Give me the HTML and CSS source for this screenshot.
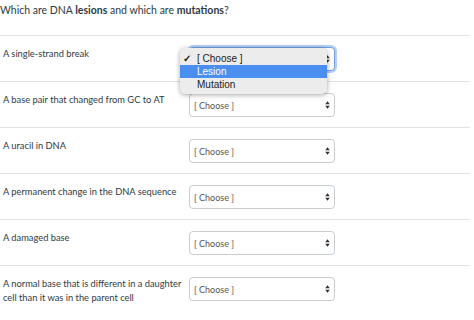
FILE: index.html
```html
<!DOCTYPE html>
<html>
	<head>
		<meta charset="utf-8">
		<title>DNA lesions and mutations</title>
		<link rel="stylesheet" href="styles.css">
	</head>
	<body>
		<div id="quiz">
			<p class="title">Which are DNA <b>lesions</b> and which are <b>mutations</b>?</p>
			<div class="row">
				<div class="label">A single-strand break</div>
				<div class="pick focus"><span>[ Choose ]</span><svg class="arr" width="5" height="8" viewBox="0 0 5 8"><path d="M2.5 0.3L4.8 3.3H0.2Z M2.5 7.7L4.8 4.7H0.2Z" fill="#333"/></svg></div>
			</div>
			<div class="row">
				<div class="label">A base pair that changed from GC to AT</div>
				<div class="pick"><span>[ Choose ]</span><svg class="arr" width="5" height="8" viewBox="0 0 5 8"><path d="M2.5 0.3L4.8 3.3H0.2Z M2.5 7.7L4.8 4.7H0.2Z" fill="#333"/></svg></div>
			</div>
			<div class="row">
				<div class="label">A uracil in DNA</div>
				<div class="pick"><span>[ Choose ]</span><svg class="arr" width="5" height="8" viewBox="0 0 5 8"><path d="M2.5 0.3L4.8 3.3H0.2Z M2.5 7.7L4.8 4.7H0.2Z" fill="#333"/></svg></div>
			</div>
			<div class="row">
				<div class="label">A permanent change in the DNA sequence</div>
				<div class="pick"><span>[ Choose ]</span><svg class="arr" width="5" height="8" viewBox="0 0 5 8"><path d="M2.5 0.3L4.8 3.3H0.2Z M2.5 7.7L4.8 4.7H0.2Z" fill="#333"/></svg></div>
			</div>
			<div class="row">
				<div class="label">A damaged base</div>
				<div class="pick"><span>[ Choose ]</span><svg class="arr" width="5" height="8" viewBox="0 0 5 8"><path d="M2.5 0.3L4.8 3.3H0.2Z M2.5 7.7L4.8 4.7H0.2Z" fill="#333"/></svg></div>
			</div>
			<div class="row last">
				<div class="label">A normal base that is different in a daughter cell than it was in the parent cell</div>
				<div class="pick"><span>[ Choose ]</span><svg class="arr" width="5" height="8" viewBox="0 0 5 8"><path d="M2.5 0.3L4.8 3.3H0.2Z M2.5 7.7L4.8 4.7H0.2Z" fill="#333"/></svg></div>
			</div>
			<ul id="menu">
				<li><i>✓</i>[ Choose ]</li>
				<li class="on"><i></i>Lesion</li>
				<li><i></i>Mutation</li>
			</ul>
		</div>
	</body>
</html>
```

FILE: styles.css
```css
* {
	margin: 0;
	padding: 0;
}
body {
	background: #fff;
	font-family: Lato, "Liberation Sans", sans-serif;
	color: #2d3b45;
}
#quiz {
	width: 470px;
	position: relative;
}
.title {
	font-size: 10.5px;
	line-height: 20px;
	height: 35px;
}
.title b {
	font-weight: bold;
}
.row {
	display: flex;
	border-top: 1px solid #dfe3e6;
	height: 45px;
}
.label {
	width: 180px;
	padding: 11px 0 0 3px;
	font-size: 9.3px;
	line-height: 14px;
}
.pick {
	box-sizing: border-box;
	width: 146px;
	height: 24px;
	margin: 11px 0 0 6px;
	border: 1px solid #c7cdd1;
	border-radius: 4px;
	display: flex;
	align-items: center;
	justify-content: space-between;
	padding: 0 4px 0 4px;
	font-size: 9px;
	color: #555;
	background: #fff;
}
.pick.focus {
	border-color: #6f9fe6;
	box-shadow: 0 0 0 2px rgba(120, 165, 235, 0.55);
}
/* text sits under the open menu */
.pick.focus span {
	visibility: hidden;
}
#menu {
	list-style: none;
	position: absolute;
	left: 180px;
	top: 48px;
	width: 147px;
	padding: 4px 0 3px;
	background: #ececec;
	border-radius: 5px;
	box-shadow: 0 1px 5px rgba(0, 0, 0, 0.35);
	font-family: "Liberation Sans", Arial, sans-serif;
	font-size: 10px;
	color: #222;
}
#menu li {
	height: 13px;
	line-height: 13px;
	display: flex;
}
#menu li i {
	font-style: normal;
	font-weight: bold;
	width: 17px;
	padding-left: 3px;
	box-sizing: border-box;
}
#menu li.on {
	background: #4a8ef0;
	color: #fff;
}
```
